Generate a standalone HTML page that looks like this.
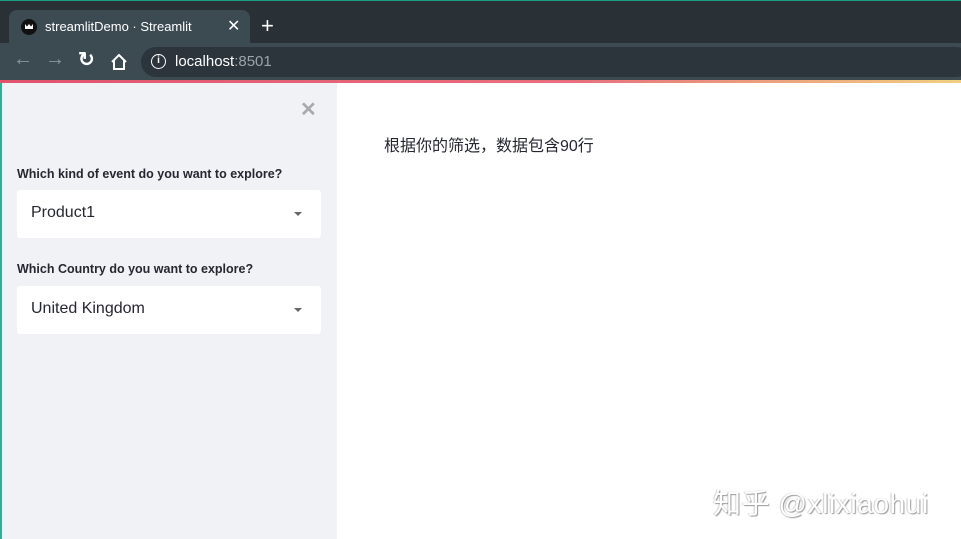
<!DOCTYPE html>
<html><head><meta charset="utf-8"><style>
*{margin:0;padding:0;box-sizing:border-box}
body{width:961px;height:539px;overflow:hidden;font-family:"Liberation Sans","Noto Sans CJK SC",sans-serif;background:#fff;position:relative}
.top{position:absolute;left:0;top:0;width:961px;height:80px;background:#202124;border-top:1px solid #1a9e86}
.tabbar{position:absolute;left:0;top:0;width:961px;height:44px;background:#2a3136}
.tab{position:absolute;left:9px;top:9px;width:241px;height:36px;background:#3c4a52;border-radius:8px 8px 0 0}
.toolbar{position:absolute;left:0;top:42px;width:961px;height:38px;background:#3c4a52}
.addr{position:absolute;left:141px;top:4px;width:830px;height:30px;background:#2b353b;border-radius:15px}
.pink{position:absolute;left:0;top:80px;width:961px;height:3px;background:linear-gradient(90deg,#e0546e,#e8707e 60%,#f0d080)}
.side{position:absolute;left:0;top:83px;width:337px;height:456px;background:#f0f2f6;border-left:2px solid #2bb39a}
.lbl{position:absolute;left:15px;font-size:12.5px;font-weight:bold;color:#262730}
.sel{position:absolute;left:15px;width:304px;height:48px;background:#fff;border-radius:3px;font-size:16px;color:#262730;padding:14px 14px}
.caret{position:absolute;right:19px;top:22px;width:0;height:0;border-left:4px solid transparent;border-right:4px solid transparent;border-top:4px solid #666}
</style></head><body>
<div class="top">
<div class="tabbar"></div>
<div class="tab">
<div style="position:absolute;left:12px;top:9px;width:16px;height:16px;border-radius:8px;background:#111"><div style="position:absolute;left:4px;top:5px;width:8px;height:5px;background:#fff;clip-path:polygon(0 0,25% 50%,50% 0,75% 50%,100% 0,100% 100%,0 100%)"></div></div>
<div style="position:absolute;left:36px;top:9px;font-size:13px;color:#fff">streamlitDemo · Streamlit</div>
<div style="position:absolute;left:218px;top:6px;font-size:16px;color:#fff">✕</div>
</div>
<div style="position:absolute;left:261px;top:14px;font-size:22px;color:#fff;line-height:22px">+</div>
<div class="toolbar">
<div style="position:absolute;left:13px;top:5px;font-size:20px;color:#8a969c">←</div>
<div style="position:absolute;left:45px;top:5px;font-size:20px;color:#8a969c">→</div>
<div style="position:absolute;left:78px;top:4px;font-size:20px;color:#fff;font-weight:bold">↻</div>
<svg style="position:absolute;left:110px;top:10px" width="18" height="18" viewBox="0 0 18 18"><path d="M2 9 L9 2 L16 9 M4 7 V16 H14 V7" fill="none" stroke="#fff" stroke-width="2"/></svg>
<div class="addr">
<div style="position:absolute;left:10px;top:7px;width:15px;height:15px;border:1.5px solid #fff;border-radius:8px;color:#fff;font-size:10px;text-align:center;line-height:12px;font-weight:bold">i</div>
<div style="position:absolute;left:34px;top:6px;font-size:15px;color:#fff">localhost<span style="color:#9aa4a9">:8501</span></div>
</div>
</div>
</div>
<div class="pink"></div>
<div class="side">
<div style="position:absolute;left:298px;top:14px;font-size:20px;color:#aaa;font-weight:bold">✕</div>
<div class="lbl" style="top:84px">Which kind of event do you want to explore?</div>
<div class="sel" style="top:107px">Product1<div class="caret"></div></div>
<div class="lbl" style="top:179px">Which Country do you want to explore?</div>
<div class="sel" style="top:203px">United Kingdom<div class="caret"></div></div>
</div>
<div style="position:absolute;left:384px;top:132px;font-size:16px;color:#262730">根据你的筛选，数据包含90行</div>
<div style="position:absolute;left:713px;top:482px;font-size:28px;letter-spacing:0.6px;color:#fff;text-shadow:1px 1px 1px #999,-1px 0 1px #ccc">知乎 @xlixiaohui</div>
</body></html>
